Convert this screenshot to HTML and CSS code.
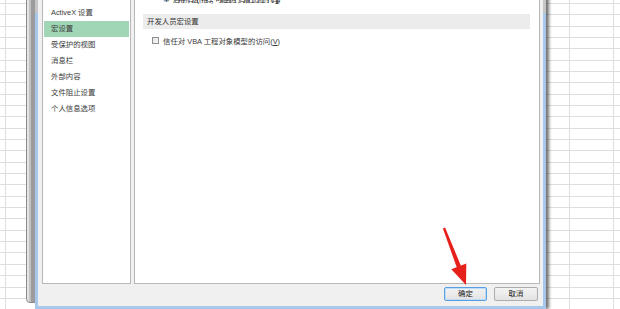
FILE: index.html
```html
<!DOCTYPE html>
<html lang="zh-CN">
<head>
<meta charset="utf-8">
<title>信任中心</title>
<link rel="stylesheet" href="styles.css">
</head>
<body>
<div class="back-dialog"></div>
<div class="dialog">
  <div class="main">
    <ul class="nav">
      <li>ActiveX 设置</li>
      <li class="active">宏设置</li>
      <li>受保护的视图</li>
      <li>消息栏</li>
      <li>外部内容</li>
      <li>文件阻止设置</li>
      <li>个人信息选项</li>
    </ul>
    <div class="panel">
      <div class="radio-row"><span class="radio checked"></span><span class="opt squeeze">启用所有宏(不推荐；可能会运行有潜在危险的代码)(<u>E</u>)</span></div>
      <div class="section">开发人员宏设置</div>
      <div class="check-row"><span class="checkbox"></span><span class="opt">信任对 VBA 工程对象模型的访问(<u>V</u>)</span></div>
    </div>
  </div>
  <div class="buttons">
    <button class="btn primary">确定</button>
    <button class="btn">取消</button>
  </div>
</div>
<svg class="arrow" width="620" height="309" viewBox="0 0 620 309">
  <polygon points="445.1,227.6 442.9,228.4 456.9,267.8 461.1,266.2" fill="#e6211b"/>
  <polygon points="466,285 466.3,263.4 451.3,269.2" fill="#e6211b"/>
</svg>
</body>
</html>
```

FILE: styles.css
```css
html, body {
  margin: 0;
  padding: 0;
}

body {
  width: 620px;
  height: 309px;
  overflow: hidden;
  position: relative;
  font-family: "Liberation Sans", "Noto Sans CJK SC", sans-serif;
  font-size: 7.4px;
  color: #3a3a3a;
  background-color: #ffffff;
  background-image:
    repeating-linear-gradient(to bottom, transparent 0 3px, #dedede 3px 4px, transparent 4px 11.34px),
    repeating-linear-gradient(to right, transparent 0 5px, #dedede 5px 6px, transparent 6px 43.4px);
}

.back-dialog {
  position: absolute;
  left: 26px;
  top: -20px;
  width: 22px;
  height: 323px;
  box-sizing: border-box;
  border: 1px solid #8c8c8c;
  border-radius: 0 0 0 4px;
  background: linear-gradient(to right, #e4e4e4 0 2px, #c2c2c2 2px 4px, #9c9c9c 4px 8px, #b4b4b4 8px);
}

.dialog {
  position: absolute;
  left: 35px;
  top: -20px;
  width: 511px;
  height: 329px;
  box-sizing: border-box;
  border: 3px solid #a8c6ea;
  border-image: linear-gradient(to bottom, #c6c6c6 0 33px, #a9c7ea 33px) 3;
  background: #f0f0f0;
  display: flex;
  flex-direction: column;
  box-shadow: 3px 0 3px rgba(0, 0, 0, 0.55);
}

.main {
  flex: 1;
  display: flex;
  gap: 3px;
  padding: 0 3px 0 4px;
  min-height: 0;
}

.nav {
  list-style: none;
  margin: 0;
  padding: 21px 0 0;
  width: 89px;
  box-sizing: border-box;
  border: 1px solid #b8b8b8;
  background: #ffffff;
}

.nav li {
  height: 16px;
  line-height: 16px;
  margin: 0 1px;
  padding-left: 7px;
  white-space: nowrap;
}

.nav li.active {
  background: #a0d6b5;
}

.panel {
  flex: 1;
  box-sizing: border-box;
  border: 1px solid #b8b8b8;
  background: #ffffff;
  padding-top: 6px;
  overflow: hidden;
}

.radio-row {
  height: 16px;
  display: flex;
  align-items: center;
  padding-left: 28px;
  white-space: nowrap;
}

.radio {
  width: 7px;
  height: 7px;
  box-sizing: border-box;
  border: 1px solid #7d8794;
  border-radius: 50%;
  background: #f4f4f4;
  margin-right: 3px;
  flex: none;
}

.radio.checked {
  background: radial-gradient(circle, #234a80 0 2px, #eef2f6 2.4px);
}

.opt.squeeze {
  letter-spacing: -2.7px;
}

.section {
  height: 15px;
  line-height: 15px;
  margin: 8px 9px 4px 8px;
  padding-left: 4px;
  background: #ececec;
  color: #333333;
}

.check-row {
  height: 14px;
  display: flex;
  align-items: center;
  padding-left: 17px;
  white-space: nowrap;
}

.checkbox {
  width: 7px;
  height: 7px;
  box-sizing: border-box;
  border: 1px solid #8f8f8f;
  background: linear-gradient(135deg, #e2e2e2, #fbfbfb);
  margin-right: 4px;
  flex: none;
}

.buttons {
  height: 22px;
  flex: none;
  display: flex;
  justify-content: flex-end;
  align-items: flex-start;
  gap: 7px;
  padding: 3px 5px 0 0;
  box-sizing: border-box;
}

.btn {
  width: 44px;
  height: 14px;
  padding: 0;
  margin: 0;
  font-family: "Liberation Sans", "Noto Sans CJK SC", sans-serif;
  font-size: 7.4px;
  line-height: 12px;
  color: #222222;
  border: 1px solid #acacac;
  border-radius: 2px;
  background: linear-gradient(to bottom, #f3f3f3, #e3e3e3);
}

.btn.primary {
  width: 43px;
  border-color: #5a9fe0;
  box-shadow: inset 0 0 0 1px #bcdcf7;
}

.arrow {
  position: absolute;
  left: 0;
  top: 0;
  pointer-events: none;
}
```
